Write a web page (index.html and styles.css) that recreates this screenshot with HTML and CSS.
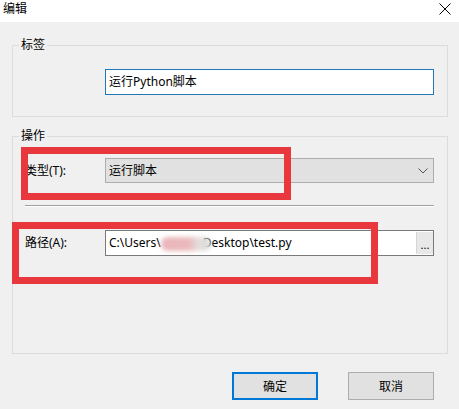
FILE: index.html
```html
<!DOCTYPE html>
<html lang="zh-CN">
<head>
<meta charset="utf-8">
<title>编辑</title>
<link rel="stylesheet" href="styles.css">
</head>
<body>
<div class="dialog">
  <div class="titlebar">
    <span class="title">编辑</span>
    <svg class="close" width="12" height="12" viewBox="0 0 12 12"><path d="M0.5 0.5 L11.5 11.5 M11.5 0.5 L0.5 11.5" stroke="#000" stroke-width="1" fill="none"/></svg>
  </div>
  <div class="content">
    <fieldset class="group group-label">
      <legend>标签</legend>
      <div class="row">
        <span class="label"></span>
        <div class="textbox focused">运行Python脚本</div>
      </div>
    </fieldset>
    <fieldset class="group group-action">
      <legend>操作</legend>
      <div class="row">
        <span class="label">类型(T):</span>
        <div class="combo">
          <span>运行脚本</span>
          <svg class="chevron" width="10" height="6" viewBox="0 0 10 6"><path d="M0.5 0.5 L5 5 L9.5 0.5" stroke="#555" stroke-width="1" fill="none"/></svg>
        </div>
      </div>
      <div class="sep"></div>
      <div class="row">
        <span class="label">路径(A):</span>
        <div class="textbox path">
          <span class="path-text">C:\Users\<span class="hidden-name"></span>Desktop\test.py</span>
          <span class="smudge"></span>
          <span class="browse">...</span>
        </div>
      </div>
    </fieldset>
    <div class="buttons">
      <button class="btn default">确定</button>
      <button class="btn">取消</button>
    </div>
  </div>
  <div class="mark mark-type"></div>
  <div class="mark mark-path"></div>
</div>
</body>
</html>
```

FILE: styles.css
```css
html, body {
  margin: 0;
  padding: 0;
}
body {
  width: 459px;
  height: 409px;
  overflow: hidden;
  background: #f0f0f0;
  font-family: "Noto Sans", "Noto Sans CJK SC", sans-serif;
  font-size: 12px;
  color: #000;
}
.dialog {
  position: relative;
  width: 459px;
  height: 409px;
  background: #f0f0f0;
}
.titlebar {
  height: 22px;
  background: #fff;
  display: flex;
  align-items: center;
  justify-content: space-between;
  padding: 0 8px 0 3px;
}
.title {
  line-height: 16px;
  margin-top: -4px;
}
.close {
  margin-top: -4px;
}
.content {
  padding: 0 11px 0 12px;
}
.group {
  margin: 0;
  padding: 0;
  min-inline-size: 0;
  border: 1px solid #dcdcdc;
}
.group legend {
  margin-left: 6px;
  padding: 0 2px;
  line-height: 16px;
}
.group-label {
  margin-top: 15px;
  padding: 16px 13px 21px 0;
}
.group-action {
  margin-top: 11px;
  padding: 14px 13px 97px 0;
}
.row {
  display: grid;
  grid-template-columns: 80px 1fr;
  align-items: center;
  padding-left: 12px;
}
.label {
  line-height: 16px;
}
.textbox {
  height: 26px;
  box-sizing: border-box;
  background: #fff;
  border: 1px solid #7a7a7a;
  padding-left: 3px;
  display: flex;
  align-items: center;
  position: relative;
  line-height: 16px;
}
.textbox.focused {
  border-color: #1f78b8;
}
.combo {
  height: 25px;
  box-sizing: border-box;
  background: #e1e1e1;
  border: 1px solid #adadad;
  padding: 0 4px 0 3px;
  display: flex;
  align-items: center;
  justify-content: space-between;
  line-height: 16px;
}
.chevron {
  margin-right: 1px;
}
.sep {
  height: 1px;
  background: #a0a0a0;
  margin: 22px 0 24px 12px;
  box-shadow: 0 1px 0 #fff;
}
.path {
  border-color: #7a7a7a;
}
.path-text {
  flex: 1;
  white-space: nowrap;
}
.hidden-name {
  display: inline-block;
  width: 42px;
}
.smudge {
  position: absolute;
  left: 55px;
  top: 6px;
  width: 50px;
  height: 14px;
  border-radius: 7px;
  background: linear-gradient(90deg, #e9b6ba 0%, #ebb9bd 55%, #e4dede 75%, #dcdcdc 100%);
  filter: blur(2px);
}
.browse {
  width: 17px;
  align-self: stretch;
  margin: 1px 0;
  background: #e8e8e8;
  border-left: 1px solid #d6d6d6;
  display: flex;
  align-items: center;
  justify-content: center;
  box-sizing: border-box;
  font-size: 11px;
  line-height: 12px;
  padding-top: 3px;
}
.buttons {
  display: flex;
  justify-content: flex-end;
  gap: 30px;
  margin-top: 18px;
  padding-right: 14px;
}
.btn {
  width: 86px;
  height: 28px;
  box-sizing: border-box;
  background: #e1e1e1;
  border: 1px solid #adadad;
  font-family: "Noto Sans", "Noto Sans CJK SC", sans-serif;
  font-size: 12px;
  color: #000;
  padding: 0;
  margin: 0;
}
.btn.default {
  border: 2px solid #0078d7;
}
.mark {
  position: absolute;
  border: 7px solid #e9383d;
  box-sizing: border-box;
}
.mark-type {
  left: 21px;
  top: 147px;
  width: 270px;
  height: 53px;
}
.mark-path {
  left: 12px;
  top: 222px;
  width: 366px;
  height: 62px;
}
```
